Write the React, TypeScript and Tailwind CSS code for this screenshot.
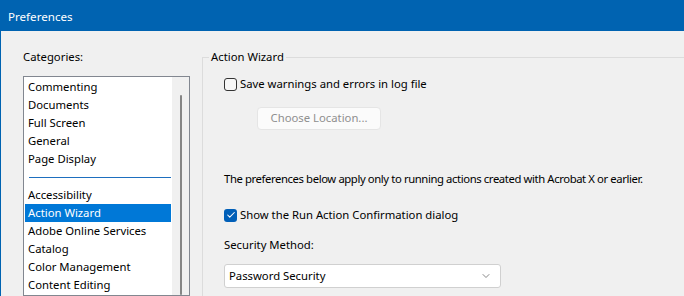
import { Check, ChevronDown } from "lucide-react";

const groupA = ["Commenting", "Documents", "Full Screen", "General", "Page Display"];
const groupB = [
  "Accessibility",
  "Action Wizard",
  "Adobe Online Services",
  "Catalog",
  "Color Management",
  "Content Editing",
];

function Item({ name, active }: { name: string; active?: boolean }) {
  return (
    <div
      className={`h-[18px] leading-[18px] pl-[3px] whitespace-nowrap ${
        active ? "bg-[#0078D7] text-white" : "text-black"
      }`}
    >
      {name}
    </div>
  );
}

export default function App() {
  return (
    <div
      className="w-[684px] h-[296px] overflow-hidden flex flex-col bg-[#F0F0F0] border-l border-[#0063B1] text-[11.3px] text-black"
      style={{ fontFamily: '"Noto Sans", "Segoe UI", sans-serif' }}
    >
      {/* Title bar */}
      <div className="h-[31px] shrink-0 bg-[#0063B1] text-white text-[11.6px] flex items-center pl-[8px] pt-[2px] -ml-px">
        Preferences
      </div>

      <div className="flex flex-1 min-h-0">
        {/* Categories */}
        <div className="w-[201px] shrink-0 pl-[22px] pt-[18px] flex flex-col">
          <div className="h-[16px] leading-[16px]">Categories:</div>
          <div className="mt-[11px] w-[167px] flex-1 border border-[#828790] bg-white flex">
            <div className="flex-1 pt-[1px] px-[1px]">
              {groupA.map((n) => (
                <Item key={n} name={n} />
              ))}
              <div className="h-[18px] flex items-center pl-[4px]">
                <div className="h-px w-full bg-[#1E6FBF]" />
              </div>
              {groupB.map((n) => (
                <Item key={n} name={n} active={n === "Action Wizard"} />
              ))}
            </div>
            <div className="w-[17px] shrink-0 bg-[#F0F0F0] flex justify-center pt-[18px]">
              <div className="w-[2px] h-full bg-[#858585] rounded-full" />
            </div>
          </div>
        </div>

        {/* Action Wizard group */}
        <fieldset className="mt-[18px] flex-1 border-t border-l border-[#DCDCDC]">
          <legend className="ml-[6px] px-[2px] h-[16px] leading-[16px]">Action Wizard</legend>

          <div className="pl-[21px]">
            <label className="mt-[11px] h-[16px] flex items-center gap-[3px]">
              <span className="w-[13px] h-[13px] rounded-[3px] border border-[#333] bg-[#F7F7F7]" />
              <span className="leading-[16px]">Save warnings and errors in log file</span>
            </label>

            <div className="mt-[15px] ml-[33px] w-[124px] h-[23px] rounded-[4px] border border-[#E5E5E5] bg-[#FBFBFB] text-[#8F8F8F] flex items-center justify-center">
              Choose Location...
            </div>

            <div className="mt-[41px] h-[16px] leading-[16px] whitespace-nowrap tracking-[-0.4px]">
              The preferences below apply only to running actions created with Acrobat X or earlier.
            </div>

            <label className="mt-[20px] h-[16px] flex items-center gap-[3px]">
              <span className="w-[13px] h-[13px] rounded-[3px] bg-[#005FB8] flex items-center justify-center">
                <Check size={10} strokeWidth={2.5} className="text-white" />
              </span>
              <span className="leading-[16px]">Show the Run Action Confirmation dialog</span>
            </label>

            <div className="mt-[14px] h-[16px] leading-[16px]">Security Method:</div>

            <div className="mt-[11px] w-[277px] h-[24px] rounded-[3px] border border-[#D0D0D0] bg-white flex items-center justify-between pl-[4px] pr-[8px]">
              <span>Password Security</span>
              <ChevronDown size={12} strokeWidth={1.5} className="text-[#5F5F5F]" />
            </div>
          </div>
        </fieldset>
      </div>
    </div>
  );
}
